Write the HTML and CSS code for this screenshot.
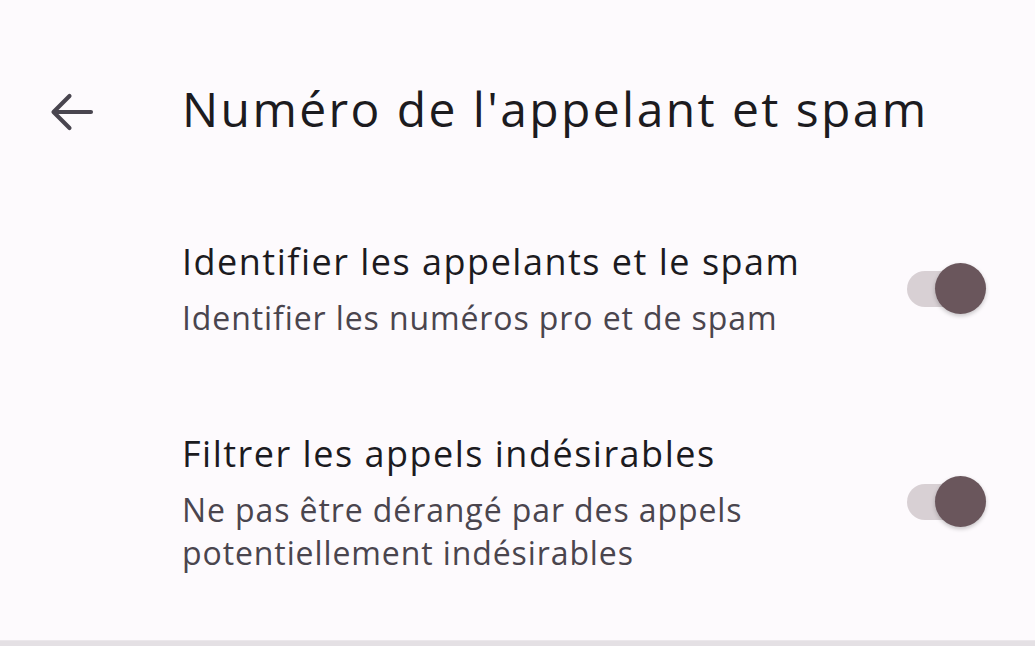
FILE: index.html
```html
<!DOCTYPE html>
<html lang="fr">
<head>
  <meta charset="UTF-8">
  <title>Numéro de l'appelant et spam</title>
  <link rel="stylesheet" href="styles.css">
</head>
<body>
<div class="screen">
  <div class="topbar">
    <button class="back" aria-label="Retour">
      <svg viewBox="0 0 24 24" width="60" height="60">
        <path d="M19.6 12H4.8M11 5.6L4.6 12l6.4 6.4" fill="none" stroke="#49454f" stroke-width="1.65" stroke-linecap="round" stroke-linejoin="round"/>
      </svg>
    </button>
    <h1>Numéro de l'appelant et spam</h1>
  </div>

  <div class="setting first">
    <div class="texts">
      <div class="title">Identifier les appelants et le spam</div>
      <div class="summary">Identifier les numéros pro et de spam</div>
    </div>
    <div class="switch on"><span class="track"></span><span class="thumb"></span></div>
  </div>

  <div class="setting">
    <div class="texts">
      <div class="title">Filtrer les appels indésirables</div>
      <div class="summary">Ne pas être dérangé par des appels<br>potentiellement indésirables</div>
    </div>
    <div class="switch on"><span class="track"></span><span class="thumb"></span></div>
  </div>

  <div class="navbar"></div>
</div>
</body>
</html>
```

FILE: styles.css
```css
body { margin: 0; background: #fdfafd; font-family: "Open Sans", Roboto, sans-serif; color: #1c1b1f; }
.screen { height: 646px; display: flex; flex-direction: column; overflow: hidden; }

.topbar { display: flex; align-items: center; height: 60px; margin-top: 79px; }
.back { width: 182px; padding: 5px 0 0 42px; border: none; background: none; display: flex; align-items: center; }
.topbar h1 { margin: 0; font-size: 48px; line-height: 60px; font-weight: 400; letter-spacing: 2.4px; }

.setting { display: flex; align-items: center; padding: 0 49px 0 182px; }
.setting.first { margin-top: 97px; }
.setting + .setting { margin-top: 89px; }
.texts { flex: 1; }
.title { font-size: 36px; line-height: 52px; letter-spacing: 1.5px; }
.summary { margin-top: 8px; font-size: 32px; line-height: 43px; letter-spacing: 0.9px; color: #4a454e; }

.switch { position: relative; width: 79px; height: 52px; margin-top: 2px; }
.track { position: absolute; left: 0; top: 8px; width: 72px; height: 36px; border-radius: 18px; background: #d8d0d4; }
.thumb { position: absolute; right: 0; top: 0; width: 51px; height: 51px; border-radius: 50%; background: #6a565c; box-shadow: 0 2px 4px rgba(0,0,0,0.22); }

.navbar { margin-top: auto; height: 5px; background: #e4e0e4; border-top: 1px solid #ebe7eb; }
```
